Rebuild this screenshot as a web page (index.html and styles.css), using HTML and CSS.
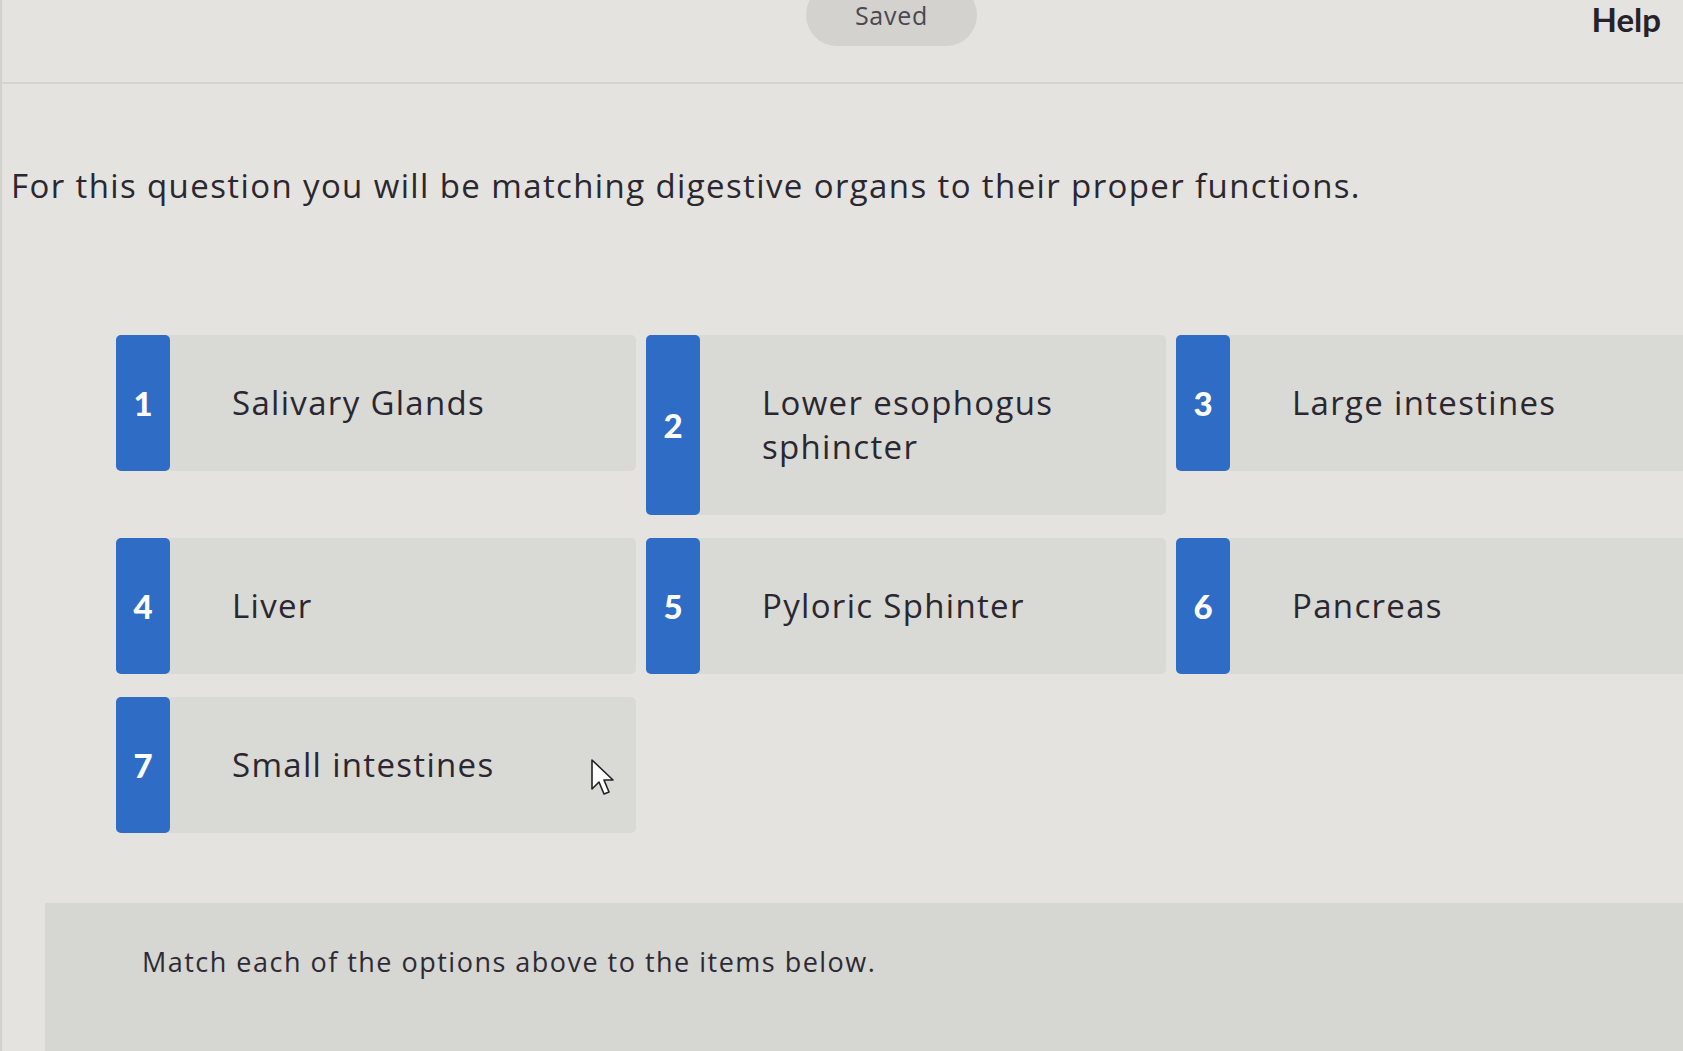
FILE: index.html
```html
<!DOCTYPE html>
<html lang="en">
<head>
  <meta charset="UTF-8" />
  <meta name="viewport" content="width=device-width, initial-scale=1.0"/>
  <title>Matching question</title>
  <link rel="stylesheet" href="styles.css">
</head>
<body>
  <header class="topbar">
    <div class="saved">Saved</div>
    <a class="help" href="#">Help</a>
  </header>

  <main class="question">
    <p class="prompt">For this question you will be matching digestive organs to their proper functions.</p>

    <!-- draggable choices -->
    <div class="choices">
      <div class="choice"><span class="num">1</span><span class="label">Salivary Glands</span></div>
      <div class="choice"><span class="num">2</span><span class="label">Lower esophogus<br>sphincter</span></div>
      <div class="choice"><span class="num">3</span><span class="label">Large intestines</span></div>
      <div class="choice"><span class="num">4</span><span class="label">Liver</span></div>
      <div class="choice"><span class="num">5</span><span class="label">Pyloric Sphinter</span></div>
      <div class="choice"><span class="num">6</span><span class="label">Pancreas</span></div>
      <div class="choice"><span class="num">7</span><span class="label">Small intestines</span></div>
    </div>

    <div class="targets">
      <p class="hint">Match each of the options above to the items below.</p>
    </div>
  </main>

  <svg class="pointer" width="28" height="40" viewBox="0 0 28 40">
    <path d="M2 2 L2 31 L9 24 L14 36 L19 34 L14 22 L23 22 Z" fill="#fff" stroke="#222" stroke-width="1.6" stroke-linejoin="round"/>
  </svg>
</body>
</html>
```

FILE: styles.css
```css
* {
  box-sizing: border-box;
}
html, body {
  overflow: hidden;
}
body {
  margin: 0;
  font-family: 'Open Sans', Lato, sans-serif;
  background: #e4e3df;
  color: #2b2730;
  min-height: 100vh;
  border-left: 2px solid #d2d1cd;
}
.topbar {
  height: 84px;
  display: grid;
  grid-template-columns: 804px 171px 1fr;
  border-bottom: 2px solid #d4d3cf;
}
.saved {
  grid-column: 2;
  margin-top: -16px;
  height: 62px;
  line-height: 62px;
  text-align: center;
  background: #d3d2cf;
  border-radius: 31px;
  color: #4a4850;
  font-size: 25px;
  letter-spacing: 0.03em;
}
.help {
  grid-column: 3;
  justify-self: end;
  margin: 0 22px 0 0;
  font-family: Lato, sans-serif;
  font-size: 33px;
  font-weight: 700;
  line-height: 38px;
  color: #26222b;
  text-decoration: none;
}
.question {
  padding-left: 9px;
}
.prompt {
  margin: 81px 0 0;
  font-size: 33px;
  line-height: 41px;
  letter-spacing: 0.042em;
}
.choices {
  margin: 129px 0 0 105px;
  width: 1600px;
  display: flex;
  flex-wrap: wrap;
  align-items: flex-start;
  column-gap: 10px;
  row-gap: 23px;
}
.choice {
  width: 520px;
  display: flex;
  background: #d9d9d6;
  border-radius: 5px;
}
.num {
  width: 54px;
  flex-shrink: 0;
  display: flex;
  align-items: center;
  justify-content: center;
  background: #2f6cc5;
  color: #fff;
  font-family: Lato, sans-serif;
  font-size: 33px;
  font-weight: 900;
  border-radius: 5px;
}
.label {
  padding: 46px 20px 46px 62px;
  font-size: 33px;
  line-height: 44px;
  letter-spacing: 0.04em;
}
.targets {
  margin: 70px 0 0 34px;
  width: 1700px;
  height: 200px;
  background: #d6d6d3;
  padding: 42px 0 0 97px;
}
.hint {
  margin: 0;
  font-size: 27px;
  line-height: 34px;
  letter-spacing: 0.055em;
  color: #2e2a33;
}
.pointer {
  position: absolute;
  left: 590px;
  top: 758px;
}
```
